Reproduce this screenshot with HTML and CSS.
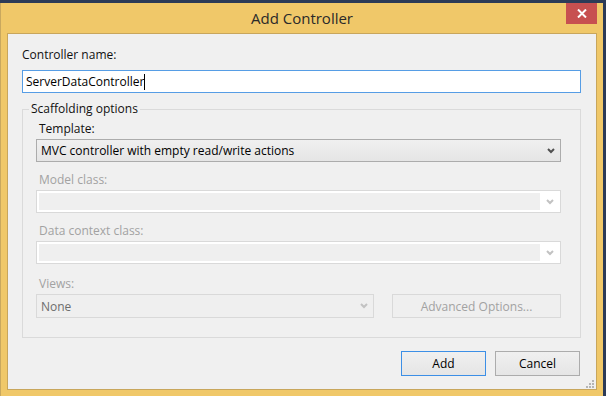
FILE: index.html
```html
<!DOCTYPE html>
<html lang="en">
<head>
    <meta charset="UTF-8">
    <meta name="viewport" content="width=device-width, initial-scale=1.0">
    <title>Add Controller</title>
    <link rel="stylesheet" href="styles.css">
</head>
<body>
    <div class="window">
        <!-- title bar -->
        <div class="titlebar">
            <span class="title">Add Controller</span>
            <button type="button" class="close-btn" aria-label="Close">
                <svg width="10" height="9" viewBox="0 0 10 9">
                    <path d="M1 0.5 L9 8.5 M9 0.5 L1 8.5" stroke="#fff" stroke-width="2" fill="none"/>
                </svg>
            </button>
        </div>

        <!-- dialog body -->
        <div class="content">
            <div class="label">Controller name:</div>
            <div class="textbox"><span>ServerDataController</span><span class="caret"></span></div>

            <fieldset class="group">
                <legend>Scaffolding options</legend>

                <div class="field">
                    <div class="label">Template:</div>
                    <div class="combo">
                        <span>MVC controller with empty read/write actions</span>
                        <svg class="chevron" width="8" height="6" viewBox="0 0 8 6">
                            <path d="M1 1 L4 4 L7 1" stroke="#505050" stroke-width="2" fill="none"/>
                        </svg>
                    </div>
                </div>

                <div class="field">
                    <div class="label disabled">Model class:</div>
                    <div class="combo combo-off">
                        <div class="combo-fill"></div>
                        <div class="combo-arrow">
                            <svg width="8" height="6" viewBox="0 0 8 6">
                                <path d="M1 1 L4 4 L7 1" stroke="#c2c2c2" stroke-width="2" fill="none"/>
                            </svg>
                        </div>
                    </div>
                </div>

                <div class="field">
                    <div class="label disabled">Data context class:</div>
                    <div class="combo combo-off">
                        <div class="combo-fill"></div>
                        <div class="combo-arrow">
                            <svg width="8" height="6" viewBox="0 0 8 6">
                                <path d="M1 1 L4 4 L7 1" stroke="#c2c2c2" stroke-width="2" fill="none"/>
                            </svg>
                        </div>
                    </div>
                </div>

                <div class="field field-views">
                    <div class="label disabled">Views:</div>
                    <div class="views-row">
                        <div class="combo combo-views">
                            <span>None</span>
                            <svg class="chevron" width="8" height="6" viewBox="0 0 8 6">
                                <path d="M1 1 L4 4 L7 1" stroke="#c2c2c2" stroke-width="2" fill="none"/>
                            </svg>
                        </div>
                        <button type="button" class="adv-btn" disabled>Advanced Options...</button>
                    </div>
                </div>
            </fieldset>

            <div class="actions">
                <button type="button" class="btn btn-default">Add</button>
                <button type="button" class="btn">Cancel</button>
            </div>

            <!-- resize grip -->
            <svg class="grip" width="9" height="9" viewBox="0 0 9 9">
                <rect x="7" y="1" width="2" height="2" fill="#b5b5b5"/>
                <rect x="4" y="4" width="2" height="2" fill="#b5b5b5"/>
                <rect x="7" y="4" width="2" height="2" fill="#b5b5b5"/>
                <rect x="1" y="7" width="2" height="2" fill="#b5b5b5"/>
                <rect x="4" y="7" width="2" height="2" fill="#b5b5b5"/>
                <rect x="7" y="7" width="2" height="2" fill="#b5b5b5"/>
            </svg>
        </div>
    </div>
</body>
</html>
```

FILE: styles.css
```css
* {
    box-sizing: border-box;
}

body {
    margin: 0;
    background-color: #2c3b57;
    font-family: "Open Sans", "Noto Sans", sans-serif;
    font-size: 12px;
    color: #111;
}

/* window frame */
.window {
    height: 393px;
    margin: 3px 3px 0 0;
    background-color: #f0c869;
    border-left: 1px solid #c9a85e;
    display: flex;
    flex-direction: column;
}

.titlebar {
    height: 30px;
    position: relative;
    display: flex;
    justify-content: center;
    align-items: center;
}

.title {
    font-size: 15px;
    color: #2a2a2a;
}

.close-btn {
    position: absolute;
    top: 0;
    right: 6px;
    width: 31px;
    height: 21px;
    padding: 0;
    border: none;
    background-color: #c75050;
    display: flex;
    align-items: center;
    justify-content: center;
}

/* dialog body */
.content {
    flex: 1;
    position: relative;
    margin: 0 6px 6px 6px;
    padding: 13px 15px 0 14px;
    background-color: #f0f0f0;
    border: 1px solid #c8a65c;
}

.label {
    line-height: 16px;
    height: 16px;
    white-space: nowrap;
}

.label.disabled {
    color: #a2a2a2;
}

.content > .label {
    margin-bottom: 7px;
}

.textbox {
    height: 23px;
    padding-left: 3px;
    border: 1px solid #569de5;
    background-color: #fff;
    display: flex;
    align-items: center;
    color: #000;
}

.caret {
    width: 1px;
    height: 16px;
    background-color: #000;
}

/* scaffolding group */
.group {
    margin: 8px 0 0 0;
    padding: 4px 19px 19px 13px;
    border: 1px solid #dadada;
    min-width: 0;
}

.group legend {
    padding: 0 2px;
    margin-left: -7px;
    line-height: 16px;
}

.field .label {
    margin-bottom: 2px;
    padding-left: 3px;
}

.field + .field {
    margin-top: 10px;
}

.field-views {
    padding-top: 2px;
}

.combo {
    height: 23px;
    padding: 0 5px 0 4px;
    border: 1px solid #acacac;
    background: linear-gradient(#f0f0f0, #e5e5e5);
    display: flex;
    align-items: center;
    justify-content: space-between;
    color: #000;
}

.combo-off {
    padding: 2px 0 2px 2px;
    border-color: #d9d9d9;
    background: #fff;
    align-items: stretch;
}

.combo-fill {
    flex: 1;
    background-color: #efefef;
}

.combo-arrow {
    width: 20px;
    display: flex;
    align-items: center;
    justify-content: center;
}

.views-row {
    display: flex;
    justify-content: space-between;
    height: 24px;
}

.combo-views {
    width: 338px;
    height: 24px;
    border-color: #d9d9d9;
    background: #efefef;
    color: #6d6d6d;
}

.adv-btn {
    width: 169px;
    height: 24px;
    border: 1px solid #d9d9d9;
    background-color: #efefef;
    font-family: inherit;
    font-size: 12px;
    color: #a2a2a2;
}

/* bottom buttons */
.actions {
    display: flex;
    justify-content: flex-end;
    gap: 9px;
    margin-top: 13px;
    padding-right: 1px;
}

.btn {
    width: 85px;
    height: 25px;
    border: 1px solid #acacac;
    background: linear-gradient(#f0f0f0, #e5e5e5);
    font-family: inherit;
    font-size: 12px;
    color: #000;
}

.btn-default {
    border-color: #3c8fe6;
}

.grip {
    position: absolute;
    right: 2px;
    bottom: 1px;
}
```
